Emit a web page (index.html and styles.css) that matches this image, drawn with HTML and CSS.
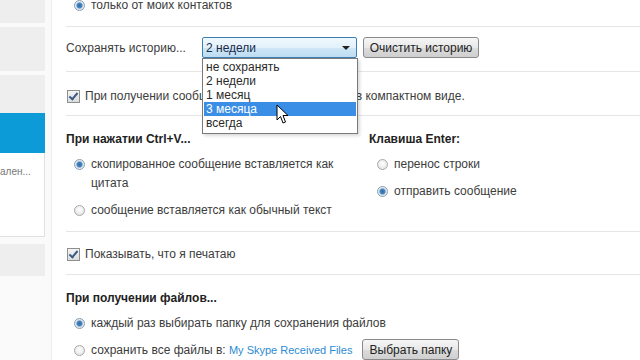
FILE: index.html
```html
<!DOCTYPE html>
<html lang="ru">

<head>
    <meta charset="UTF-8">
    <title>Настройки чата</title>
    <link rel="stylesheet" href="styles.css">
</head>

<body>
    <div class="app">
        <div class="sidebar">
            <div class="tile tile-1"></div>
            <div class="tile tile-2"></div>
            <div class="tile tile-3"></div>
            <div class="tile tile-active"></div>
            <div class="tile tile-sub">ален...</div>
            <div class="tile tile-4"></div>
        </div>

        <div class="main">
            <div class="section section-top">
                <label class="radio-row">
                    <span class="radio checked"></span>
                    <span>только от моих контактов</span>
                </label>
            </div>

            <div class="section section-history">
                <span class="field-label">Сохранять историю...</span>
                <div class="select-wrap">
                    <div class="select">
                        <span class="select-value">2 недели</span>
                        <span class="select-arrow"></span>
                    </div>
                    <ul class="dropdown">
                        <li>не сохранять</li>
                        <li>2 недели</li>
                        <li>1 месяц</li>
                        <li class="hover">3 месяца</li>
                        <li>всегда</li>
                    </ul>
                    <svg class="cursor" width="14" height="21" viewBox="0 0 14 21">
                        <path d="M1 1 L1 16 L4.5 12.5 L7 19 L9.5 18 L7 11.5 L12 11.5 Z" fill="#fff" stroke="#000" stroke-width="1" stroke-linejoin="round"/>
                    </svg>
                </div>
                <button class="btn">Очистить историю</button>
            </div>

            <div class="section section-compact">
                <label class="check-row">
                    <span class="checkbox checked"></span>
                    <span>При получении сообщений сразу показывать их в компактном виде.</span>
                </label>
            </div>

            <div class="section section-columns">
                <div class="col col-left">
                    <div class="heading">При нажатии Ctrl+V...</div>
                    <label class="radio-row">
                        <span class="radio checked"></span>
                        <span>скопированное сообщение вставляется как цитата</span>
                    </label>
                    <label class="radio-row">
                        <span class="radio"></span>
                        <span>сообщение вставляется как обычный текст</span>
                    </label>
                </div>
                <div class="col col-right">
                    <div class="heading">Клавиша Enter:</div>
                    <label class="radio-row">
                        <span class="radio"></span>
                        <span>перенос строки</span>
                    </label>
                    <label class="radio-row">
                        <span class="radio checked"></span>
                        <span>отправить сообщение</span>
                    </label>
                </div>
            </div>

            <div class="section section-typing">
                <label class="check-row">
                    <span class="checkbox checked"></span>
                    <span>Показывать, что я печатаю</span>
                </label>
            </div>

            <div class="section section-files">
                <div class="heading">При получении файлов...</div>
                <label class="radio-row">
                    <span class="radio checked"></span>
                    <span>каждый раз выбирать папку для сохранения файлов</span>
                </label>
                <div class="radio-row">
                    <span class="radio"></span>
                    <span>сохранить все файлы в: <a class="link" href="#">My Skype Received Files</a></span>
                    <button class="btn btn-folder">Выбрать папку</button>
                </div>
            </div>
        </div>
    </div>
</body>

</html>
```

FILE: styles.css
```css
* {
    box-sizing: border-box;
}

body {
    margin: 0;
    font-family: "Liberation Sans", Arial, sans-serif;
    font-size: 12px;
    color: #3c3c3c;
    background-color: #fff;
    overflow: hidden;
}

.app {
    display: flex;
    height: 360px;
}

/* left navigation */
.sidebar {
    width: 52px;
    display: flex;
    flex-direction: column;
    gap: 4px;
    padding-right: 6px;
    border-right: 1px solid #ececec;
    background-color: #fafafa;
}

.tile {
    background-color: #eeeeee;
}

.tile-1 {
    height: 23px;
}

.tile-2 {
    height: 44px;
}

.tile-3 {
    height: 38px;
    margin-bottom: -4px;
}

.tile-active {
    height: 40px;
    background-color: #0c9bd6;
    margin-bottom: -4px;
}

.tile-sub {
    height: 84px;
    background-color: #fff;
    border-right: 1px solid #e0e0e0;
    border-bottom: 1px solid #e0e0e0;
    color: #777;
    font-size: 10px;
    padding-top: 13px;
    white-space: nowrap;
    overflow: hidden;
}

.tile-4 {
    height: 32px;
    margin-top: 3px;
}

/* settings panel */
.main {
    flex: 1;
    padding-left: 14px;
}

.section {
    border-bottom: 1px solid #e6e6e6;
}

.section-top {
    display: flow-root;
    height: 27px;
}

.section-top .radio-row {
    margin-top: -4px;
}

.section-history {
    display: flex;
    align-items: center;
    height: 45px;
    padding-bottom: 3px;
}

.section-compact {
    height: 44px;
    padding-top: 15px;
}

.section-columns {
    display: flex;
    height: 116px;
    padding-top: 14px;
}

.section-typing {
    height: 43px;
    padding-top: 13px;
}

.section-files {
    border-bottom: none;
    padding-top: 14px;
}

.field-label {
    width: 136px;
}

.heading {
    font-weight: bold;
    color: #222;
    height: 19px;
    line-height: 19px;
    margin-bottom: 6px;
}

.col-left {
    width: 303px;
}

.col-right {
    flex: 1;
}

.col-left .radio-row {
    width: 275px;
}

.radio-row,
.check-row {
    display: flex;
    align-items: flex-start;
    line-height: 19px;
    margin-bottom: 8px;
}

.radio-row {
    padding-left: 8px;
}

.radio {
    flex: none;
    width: 11px;
    height: 11px;
    margin: 4px 6px 0 0;
    border-radius: 50%;
    border: 1px solid #a8a8a8;
    background: radial-gradient(circle at 50% 40%, #fff, #dedede);
}

.radio.checked {
    border-color: #8a9db0;
    background: radial-gradient(circle, #2c6da8 0, #4b86bd 2.5px, #d6e2ee 3.5px, #f4f6f8 5px);
}

.check-row {
    padding-left: 1px;
}

.checkbox {
    flex: none;
    position: relative;
    width: 13px;
    height: 13px;
    margin: 3px 5px 0 0;
    border: 1px solid #8e8f8f;
    background: linear-gradient(#f4f4f4, #dcdcdc);
}

.checkbox.checked::after {
    content: "";
    position: absolute;
    left: 3px;
    top: 0;
    width: 3px;
    height: 7px;
    border: solid #3b5a86;
    border-width: 0 2px 2px 0;
    transform: rotate(40deg);
}

.link {
    color: #2b8bd4;
    font-size: 11px;
    text-decoration: none;
}

/* buttons and select */
.btn {
    font-family: inherit;
    font-size: 12px;
    color: #222;
    height: 21px;
    padding: 0 5px;
    border: 1px solid #8a8a8a;
    border-radius: 3px;
    background: linear-gradient(#f6f6f6 0, #e8e8e8 50%, #dcdcdc 51%, #cfcfcf);
}

.section-history .btn {
    margin-left: 6px;
    width: 116px;
}

.btn-folder {
    width: 97px;
    margin-left: 10px;
    margin-top: -2px;
}

.select-wrap {
    position: relative;
}

.select {
    display: flex;
    align-items: center;
    justify-content: space-between;
    width: 155px;
    height: 21px;
    padding: 0 6px 0 3px;
    border: 1px solid #3c7fb1;
    border-radius: 2px;
    background: linear-gradient(#f0f8fd 0, #e2f1fb 50%, #cfe7f7 51%, #bcdcf2);
    color: #1a2a4a;
}

.select-arrow {
    width: 0;
    height: 0;
    border-left: 4px solid transparent;
    border-right: 4px solid transparent;
    border-top: 4px solid #222;
}

.dropdown {
    position: absolute;
    left: 0;
    top: 21px;
    width: 156px;
    margin: 0;
    padding: 1px 1px 3px;
    list-style: none;
    background-color: #fff;
    border: 1px solid #7a7a7a;
    box-shadow: 2px 2px 3px rgba(0, 0, 0, 0.15);
    z-index: 2;
}

.dropdown li {
    height: 14px;
    line-height: 14px;
    padding-left: 2px;
    color: #2a2a2a;
}

.dropdown li.hover {
    background-color: #3b8ee6;
    color: #fff;
}

.cursor {
    position: absolute;
    left: 74px;
    top: 67px;
    z-index: 3;
}
```
